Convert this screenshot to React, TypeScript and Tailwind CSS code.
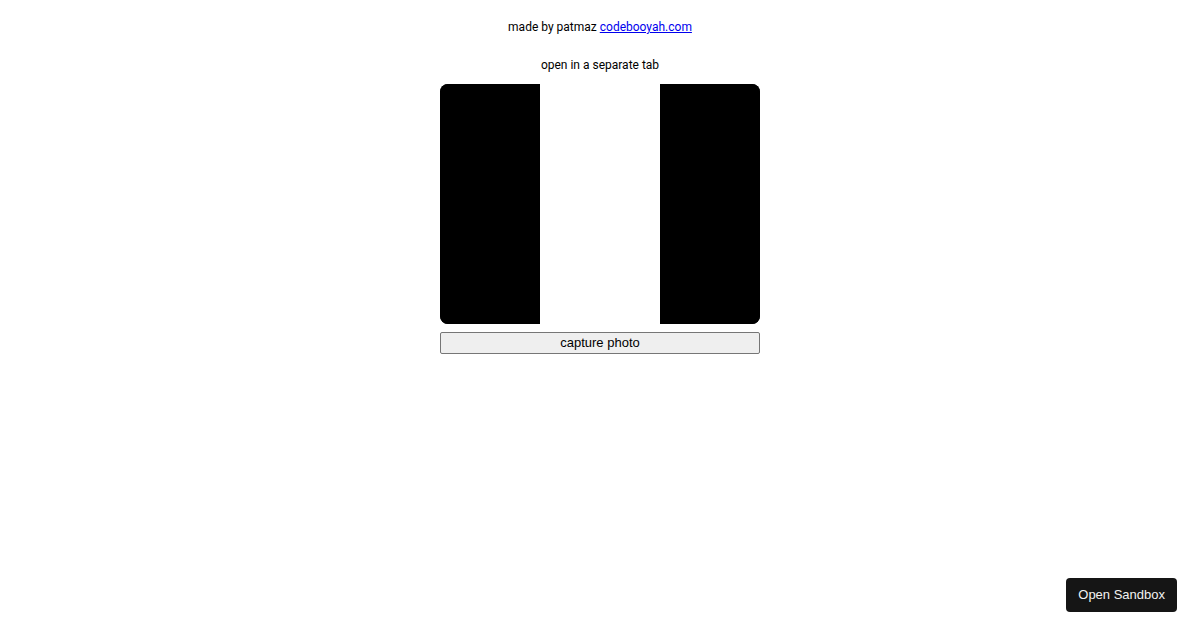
export default function App() {
  return (
    <div className="relative w-[1200px] h-[630px] bg-white" style={{ fontFamily: "Roboto, 'Liberation Sans', sans-serif" }}>
      <div className="flex flex-col items-center pt-[20px]">
        <p className="text-[12px] leading-[14px] text-black">
          made by patmaz{" "}
          <a href="#" className="text-[#0000ee] underline">
            codebooyah.com
          </a>
        </p>
        <p className="mt-[24px] text-[12px] leading-[14px] text-black">open in a separate tab</p>
        <div className="mt-[12px] flex w-[320px] h-[240px] rounded-[8px] overflow-hidden bg-black">
          <div className="w-[100px] bg-black" />
          <div className="w-[120px] bg-white" />
          <div className="w-[100px] bg-black" />
        </div>
        <button
          className="mt-[8px] w-[320px] h-[22px] bg-[#efefef] border border-[#767676] rounded-[2px] text-[13px] leading-[20px] text-black"
          style={{ fontFamily: "'Liberation Sans', Arial, sans-serif" }}
        >
          capture photo
        </button>
      </div>
      <button
        className="absolute right-[23px] bottom-[18px] h-[34px] px-[12px] rounded-[4px] bg-[#151515] text-[13px] text-[#f2f2f2]"
        style={{ fontFamily: "'Liberation Sans', Arial, sans-serif" }}
      >
        Open Sandbox
      </button>
    </div>
  );
}
